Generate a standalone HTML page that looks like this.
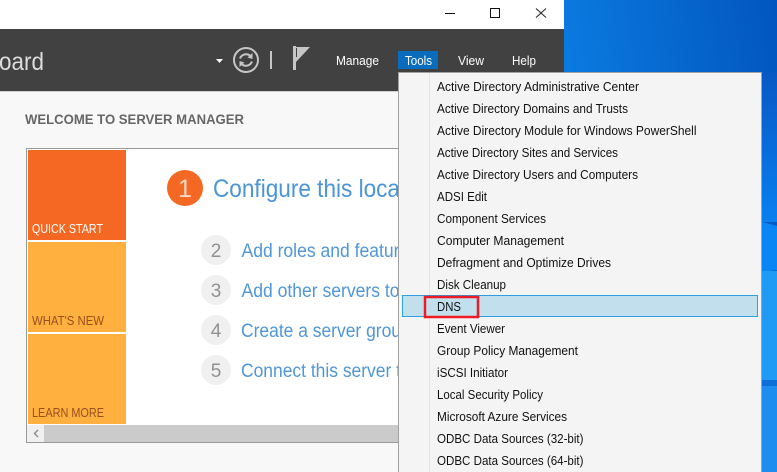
<!DOCTYPE html>
<html><head><meta charset="utf-8"><style>
html,body{margin:0;padding:0;background:#0a6ad0;width:777px;height:472px;overflow:hidden}
svg{display:block}
text{font-family:"Liberation Sans",sans-serif}
.m{font-size:12.5px;fill:#111}
.l{font-size:19px;fill:#4f97d8}
.n{font-size:19px;fill:#8f9194;text-anchor:middle}
.t{font-size:13px}
.h{font-size:13px;fill:#fff}
</style></head><body>
<svg width="777" height="472" viewBox="0 0 777 472" xmlns="http://www.w3.org/2000/svg">
<defs>
<linearGradient id="a" gradientUnits="userSpaceOnUse" x1="564" y1="40" x2="777" y2="10"><stop offset="0" stop-color="#0a7ae0"/><stop offset="1" stop-color="#0256bf"/></linearGradient>
<linearGradient id="b" x1="0" y1="0" x2="0" y2="1"><stop offset="0" stop-color="#0858c4"/><stop offset="1" stop-color="#0880f0"/></linearGradient>
</defs>
<rect width="777" height="472" fill="url(#a)"/>
<rect x="762" y="72" width="15" height="150" fill="url(#b)"/>
<polygon points="762,222 777,226 777,270 762,272" fill="#0a86f4"/>
<rect x="762" y="271" width="15" height="201" fill="#1f9bf6"/>
<rect x="762" y="380" width="15" height="6" fill="#0f6fd8"/>
<rect x="762" y="386" width="15" height="86" fill="#1d8df0"/>

<!-- window -->
<rect x="0" y="0" width="564" height="29" fill="#fff"/>
<rect x="0" y="29" width="564" height="62" fill="#414141"/>
<rect x="0" y="91" width="564" height="381" fill="#f8f8f8"/>
<rect x="0" y="91" width="564" height="1" fill="#cfcfcf"/>
<!-- caption buttons -->
<rect x="445" y="13" width="10" height="1" fill="#111"/>
<rect x="490.5" y="8.5" width="9" height="9" fill="none" stroke="#111"/>
<path d="M536 8.5L546 17.5M546 8.5L536 17.5" stroke="#222" fill="none"/>

<text x="-1" y="70" font-size="25" fill="#dcdcdc" textLength="45" lengthAdjust="spacingAndGlyphs">oard</text>
<!-- toolbar icons -->
<polygon points="216,59 223,59 219.5,63" fill="#fff"/>
<circle cx="246" cy="60" r="12" fill="none" stroke="#c6c6c6" stroke-width="2"/>
<path d="M240 58.5A6.5 6.5 0 0 1 251 56.5M252 61.5A6.5 6.5 0 0 1 241 63.5" fill="none" stroke="#c6c6c6" stroke-width="2"/>
<polygon points="252.5,53 252.5,59 247.5,57.5" fill="#c6c6c6"/>
<polygon points="239.5,67 239.5,61 244.5,62.5" fill="#c6c6c6"/>
<rect x="270" y="51" width="2" height="18" fill="#c6c6c6"/>
<rect x="293" y="46" width="3" height="24" fill="#c6c6c6"/>
<polygon points="296,47 310,47 296,62" fill="#c6c6c6"/>
<rect x="296" y="48" width="1" height="9" fill="#414141"/>
<text class="h" x="336" y="65" textLength="43" lengthAdjust="spacingAndGlyphs">Manage</text>
<rect x="398" y="51" width="40" height="18" fill="#0a6cbc"/>
<text class="h" x="405" y="65" textLength="27" lengthAdjust="spacingAndGlyphs">Tools</text>
<text class="h" x="458" y="65" textLength="26" lengthAdjust="spacingAndGlyphs">View</text>
<text class="h" x="512" y="65" textLength="24" lengthAdjust="spacingAndGlyphs">Help</text>

<text x="25" y="124" font-size="13.5" font-weight="bold" fill="#666" textLength="219" lengthAdjust="spacingAndGlyphs">WELCOME TO SERVER MANAGER</text>

<!-- welcome box -->
<rect x="26.5" y="148.5" width="500" height="294" fill="#fff" stroke="#999"/>
<rect x="28" y="150" width="98" height="90" fill="#f56823"/>
<rect x="28" y="242" width="98" height="90" fill="#ffb03f"/>
<rect x="28" y="334" width="98" height="90" fill="#ffb03f"/>
<text class="t" x="32" y="233" fill="#fff" textLength="71" lengthAdjust="spacingAndGlyphs">QUICK START</text>
<text class="t" x="32" y="325" fill="#97501f" textLength="72" lengthAdjust="spacingAndGlyphs">WHAT'S NEW</text>
<text class="t" x="32" y="417" fill="#97501f" textLength="72" lengthAdjust="spacingAndGlyphs">LEARN MORE</text>
<rect x="27" y="425" width="500" height="17" fill="#cbcbcb"/>
<rect x="27" y="425" width="17" height="17" fill="#f0f0f0"/>
<path d="M38 430L34.5 433.5L38 437" fill="none" stroke="#8a8a8a" stroke-width="1.4"/>

<circle cx="185" cy="188" r="18" fill="#f56823"/>
<text x="185" y="197" font-size="25" fill="#fbd8c6" text-anchor="middle">1</text>
<text x="213" y="197" font-size="25" fill="#4a94d8" textLength="187" lengthAdjust="spacingAndGlyphs">Configure this loca</text>

<circle cx="216" cy="250" r="15" fill="#f0f0f0"/>
<circle cx="216" cy="290" r="15" fill="#f0f0f0"/>
<circle cx="216" cy="330" r="15" fill="#f0f0f0"/>
<circle cx="216" cy="370" r="15" fill="#f0f0f0"/>
<text class="n" x="216" y="257">2</text>
<text class="n" x="216" y="297">3</text>
<text class="n" x="216" y="337">4</text>
<text class="n" x="216" y="377">5</text>
<text class="l" x="241.5" y="257" textLength="158" lengthAdjust="spacingAndGlyphs">Add roles and featur</text>
<text class="l" x="241.5" y="297" textLength="158" lengthAdjust="spacingAndGlyphs">Add other servers to</text>
<text class="l" x="241" y="337" textLength="160" lengthAdjust="spacingAndGlyphs">Create a server grou</text>
<text class="l" x="241" y="377" textLength="160" lengthAdjust="spacingAndGlyphs">Connect this server t</text>

<!-- dropdown -->
<rect x="398.5" y="72.5" width="363" height="410" fill="#f4f4f4" stroke="#a0a0a0"/>
<rect x="429" y="73" width="1" height="399" fill="#e4e4e4"/>
<rect x="402.5" y="295.5" width="355" height="21" fill="#c2dfee" stroke="#2c9fdc"/>
<text class="m" x="437" y="91" textLength="202" lengthAdjust="spacingAndGlyphs">Active Directory Administrative Center</text>
<text class="m" x="437" y="113" textLength="191" lengthAdjust="spacingAndGlyphs">Active Directory Domains and Trusts</text>
<text class="m" x="437" y="135" textLength="259.5" lengthAdjust="spacingAndGlyphs">Active Directory Module for Windows PowerShell</text>
<text class="m" x="437" y="157" textLength="181" lengthAdjust="spacingAndGlyphs">Active Directory Sites and Services</text>
<text class="m" x="437" y="179" textLength="201" lengthAdjust="spacingAndGlyphs">Active Directory Users and Computers</text>
<text class="m" x="437" y="201" textLength="50" lengthAdjust="spacingAndGlyphs">ADSI Edit</text>
<text class="m" x="437" y="223" textLength="109" lengthAdjust="spacingAndGlyphs">Component Services</text>
<text class="m" x="437" y="245" textLength="127" lengthAdjust="spacingAndGlyphs">Computer Management</text>
<text class="m" x="437" y="267" textLength="174" lengthAdjust="spacingAndGlyphs">Defragment and Optimize Drives</text>
<text class="m" x="437" y="289" textLength="69" lengthAdjust="spacingAndGlyphs">Disk Cleanup</text>
<text class="m" x="437" y="311" textLength="24" lengthAdjust="spacingAndGlyphs">DNS</text>
<text class="m" x="437" y="333" textLength="68" lengthAdjust="spacingAndGlyphs">Event Viewer</text>
<text class="m" x="437" y="355" textLength="141" lengthAdjust="spacingAndGlyphs">Group Policy Management</text>
<text class="m" x="437" y="377" textLength="71" lengthAdjust="spacingAndGlyphs">iSCSI Initiator</text>
<text class="m" x="437" y="399" textLength="106" lengthAdjust="spacingAndGlyphs">Local Security Policy</text>
<text class="m" x="437" y="421" textLength="130" lengthAdjust="spacingAndGlyphs">Microsoft Azure Services</text>
<text class="m" x="437" y="443" textLength="146.5" lengthAdjust="spacingAndGlyphs">ODBC Data Sources (32-bit)</text>
<text class="m" x="437" y="465" textLength="146.5" lengthAdjust="spacingAndGlyphs">ODBC Data Sources (64-bit)</text>
<rect x="425" y="297" width="53" height="20" fill="none" stroke="#ed1c24" stroke-width="2.5"/>
</svg>
</body></html>
